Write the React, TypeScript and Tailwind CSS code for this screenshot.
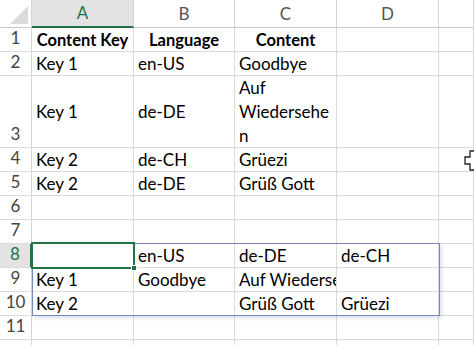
import React from 'react';

type Cell = { text?: string; bold?: boolean; center?: boolean; lines?: string[] };

const COLS = ['A', 'B', 'C', 'D', ''];
const COL_W = ['w-[102px]', 'w-[101px]', 'w-[102px]', 'w-[102px]', 'flex-1'];

const rows: { n: number; h: string; cells: Cell[] }[] = [
  {
    n: 1,
    h: 'h-[24px]',
    cells: [
      { text: 'Content Key', bold: true, center: true },
      { text: 'Language', bold: true, center: true },
      { text: 'Content', bold: true, center: true },
    ],
  },
  { n: 2, h: 'h-[24px]', cells: [{ text: 'Key 1' }, { text: 'en-US' }, { text: 'Goodbye' }] },
  {
    n: 3,
    h: 'h-[72px]',
    cells: [{ text: 'Key 1' }, { text: 'de-DE' }, { lines: ['Auf', 'Wiedersehe', 'n'] }],
  },
  { n: 4, h: 'h-[24px]', cells: [{ text: 'Key 2' }, { text: 'de-CH' }, { text: 'Grüezi' }] },
  { n: 5, h: 'h-[24px]', cells: [{ text: 'Key 2' }, { text: 'de-DE' }, { text: 'Grüß Gott' }] },
  { n: 6, h: 'h-[24px]', cells: [] },
  { n: 7, h: 'h-[24px]', cells: [] },
  { n: 8, h: 'h-[24px]', cells: [{}, { text: 'en-US' }, { text: 'de-DE' }, { text: 'de-CH' }] },
  { n: 9, h: 'h-[24px]', cells: [{ text: 'Key 1' }, { text: 'Goodbye' }, { text: 'Auf Wiederse' }] },
  { n: 10, h: 'h-[24px]', cells: [{ text: 'Key 2' }, {}, { text: 'Grüß Gott' }, { text: 'Grüezi' }] },
  { n: 11, h: 'h-[24px]', cells: [] },
  { n: 0, h: 'h-[24px]', cells: [] },
];

const font = { fontFamily: 'Lato, "Open Sans", sans-serif' };

export default function App() {
  return (
    <div className="relative w-[474px] h-[345px] overflow-hidden bg-white text-black" style={font}>
      {/* column headers */}
      <div className="flex h-[28px] border-b border-[#c8c8c8]">
        <div className="relative w-[32px] shrink-0 border-r border-[#d4d4d4]">
          <svg className="absolute right-[3px] bottom-[3px]" width="18" height="18" viewBox="0 0 18 18">
            <polygon points="18,0 18,18 0,18" fill="#dadada" />
          </svg>
        </div>
        {COLS.map((c, i) => (
          <div
            key={i}
            className={`${COL_W[i]} shrink-0 flex items-center justify-center text-[17px] border-r border-[#d4d4d4] ${
              i === 0 ? 'bg-[#e3e3e3] text-[#217346] border-b-2 border-b-[#217346] -mb-px' : 'text-[#555]'
            }`}
          >
            {c}
          </div>
        ))}
      </div>

      {rows.map((r, ri) => (
        <div key={ri} className={`flex ${r.h} border-b border-[#dadada]`}>
          <div
            className={`w-[32px] shrink-0 flex items-end justify-center pb-[1px] text-[17px] ${
              r.n === 8
                ? 'bg-[#e3e3e3] text-[#217346] border-r-2 border-[#217346]'
                : 'text-[#444] border-r border-[#d4d4d4]'
            }`}
          >
            {r.n > 0 ? r.n : ''}
          </div>
          {COLS.map((_, i) => {
            const c = r.cells[i] || {};
            return (
              <div
                key={i}
                className={`${COL_W[i]} shrink-0 overflow-hidden whitespace-nowrap border-r border-[#dadada] px-[4px] leading-[24px] flex ${
                  c.lines ? 'flex-col justify-start' : 'items-center'
                } ${c.center ? 'justify-center font-bold text-[16.5px]' : 'text-[17px]'}`}
              >
                {c.lines ? c.lines.map((l) => <span key={l}>{l}</span>) : c.text}
              </div>
            );
          })}
        </div>
      ))}

      {/* copied range A8:D10 */}
      <div className="absolute left-[32px] top-[243px] w-[408px] h-[73px] border border-[#7886b8] shadow-[2px_2px_4px_rgba(120,134,184,0.25)] pointer-events-none" />

      {/* active cell A8 */}
      <div className="absolute left-[31px] top-[242px] w-[104px] h-[27px] border-2 border-[#217346] pointer-events-none" />
      <div className="absolute left-[131px] top-[265px] w-[6px] h-[6px] bg-[#217346] border border-white" />

      {/* cursor */}
      <svg className="absolute left-[464px] top-[150px]" width="20" height="22" viewBox="0 0 20 22">
        <path
          d="M6 1 H12 V7 H18 V14 H12 V20 H6 V14 H1 V7 H6 Z"
          fill="white"
          stroke="#222"
          strokeWidth="1.3"
        />
      </svg>
    </div>
  );
}
